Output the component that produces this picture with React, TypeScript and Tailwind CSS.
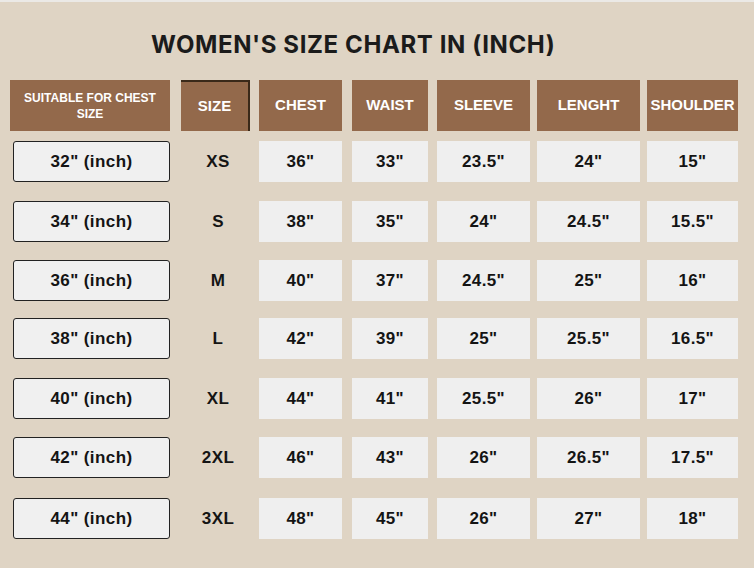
const heads = [
  { label: "SIZE", cls: "ml-[11px] w-[69px]" },
  { label: "CHEST", cls: "ml-[9px] w-[83px]" },
  { label: "WAIST", cls: "ml-[10px] w-[76px]" },
  { label: "SLEEVE", cls: "ml-[9px] w-[93px]" },
  { label: "LENGHT", cls: "ml-[7px] w-[103px]" },
  { label: "SHOULDER", cls: "ml-[7px] w-[91px]" },
];

const rows = [
  { chest: 32, size: "XS", vals: ['36"', '33"', '23.5"', '24"', '15"'], mt: "mt-[10px]" },
  { chest: 34, size: "S", vals: ['38"', '35"', '24"', '24.5"', '15.5"'], mt: "mt-[19px]" },
  { chest: 36, size: "M", vals: ['40"', '37"', '24.5"', '25"', '16"'], mt: "mt-[18px]" },
  { chest: 38, size: "L", vals: ['42"', '39"', '25"', '25.5"', '16.5"'], mt: "mt-[17px]" },
  { chest: 40, size: "XL", vals: ['44"', '41"', '25.5"', '26"', '17"'], mt: "mt-[19px]" },
  { chest: 42, size: "2XL", vals: ['46"', '43"', '26"', '26.5"', '17.5"'], mt: "mt-[18px]" },
  { chest: 44, size: "3XL", vals: ['48"', '45"', '26"', '27"', '18"'], mt: "mt-[20px]" },
];

export default function App() {
  return (
    <div className="h-[568px] w-[754px] overflow-hidden border-t-2 border-[#ebe9e6] bg-[#dfd4c4] font-['Liberation_Sans',Arial,sans-serif] text-[#141414]">
      <h1 className="pl-[151px] pt-[29px] font-['Inter',sans-serif] text-[24px] leading-[28px] font-bold tracking-[0.6px] text-[#1b1b1b]">
        WOMEN'S SIZE CHART IN (INCH)
      </h1>

      <div className="mt-[21px] flex h-[51px] text-white">
        <div className="ml-[10px] flex w-[160px] items-center justify-center bg-[#93694b] text-center text-[12px] leading-[16px] font-bold">
          SUITABLE FOR CHEST
          <br />
          SIZE
        </div>
        {heads.map((h) => (
          <div
            key={h.label}
            className={`${h.cls} flex items-center justify-center bg-[#93694b] text-[15px] font-bold ${
              h.label === "SIZE" ? "border-t-2 border-r-2 border-[#3a2919]" : ""
            }`}
          >
            {h.label}
          </div>
        ))}
      </div>

      {rows.map((r) => (
        <div key={r.chest} className={`${r.mt} flex h-[41px] text-[17px] font-bold tracking-[0.4px]`}>
          <div className="ml-[13px] flex w-[157px] items-center justify-center rounded-[3px] border border-[#222] bg-[#f0f0f0]">
            {r.chest}" (inch)
          </div>
          <div className="ml-[11px] flex w-[69px] items-center justify-center pl-[5px]">{r.size}</div>
          {r.vals.map((v, i) => (
            <div
              key={i}
              className={`${heads[i + 1].cls} flex items-center justify-center bg-[#efefef]`}
            >
              {v}
            </div>
          ))}
        </div>
      ))}
    </div>
  );
}
